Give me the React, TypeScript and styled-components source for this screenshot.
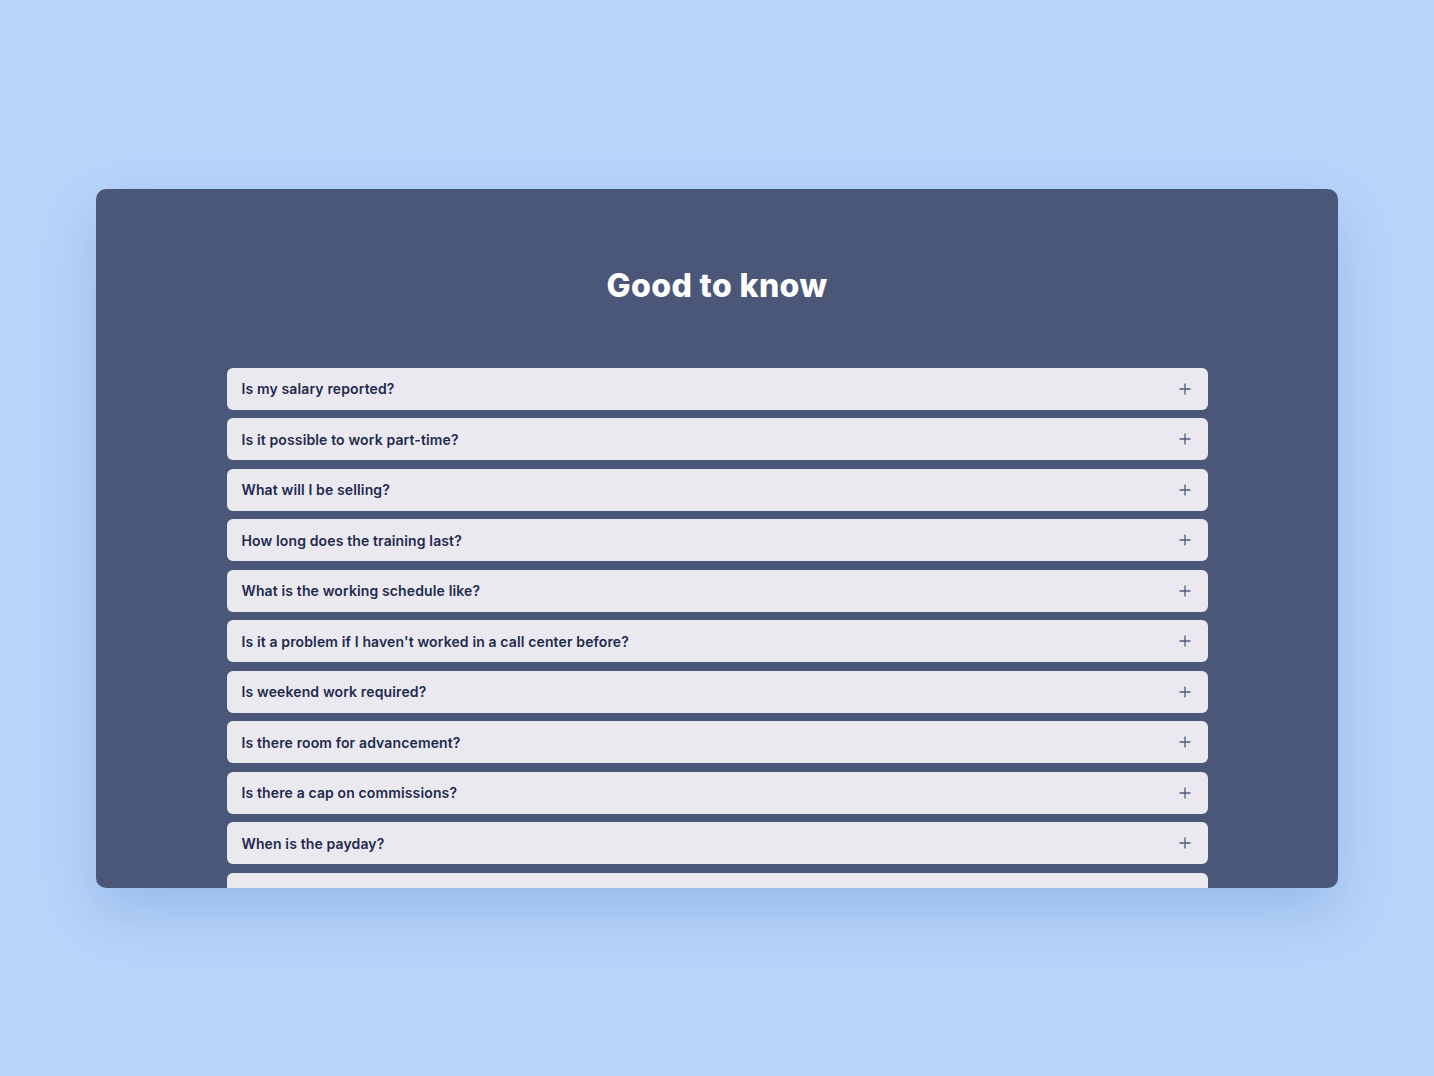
import React from 'react';
import styled, { createGlobalStyle } from 'styled-components';

const GlobalStyle = createGlobalStyle`
    html,
    body {
        margin: 0;
        padding: 0;
        background: #b8d5fa;
        font-family: Inter, 'Noto Sans', sans-serif;
    }
`;

const Page = styled.main`
    min-height: 100vh;
    display: flex;
    align-items: center;
    justify-content: center;
`;

const Card = styled.section`
    width: 1242px;
    height: 699px;
    box-sizing: border-box;
    padding-top: 78px;
    background: #4a5779;
    border-radius: 10px;
    overflow: hidden;
    box-shadow: 0 24px 60px rgba(70, 110, 190, 0.28);
    display: flex;
    flex-direction: column;
    align-items: center;
`;

const Title = styled.h2`
    margin: 0 0 63px;
    font-size: 32px;
    line-height: 38px;
    font-weight: 800;
    color: #ffffff;
    letter-spacing: 0.4px;
`;

const List = styled.ul`
    list-style: none;
    margin: 0;
    padding: 0;
    width: 981px;
    display: flex;
    flex-direction: column;
    gap: 8.5px;
`;

const Item = styled.li`
    height: 42px;
    flex-shrink: 0;
    box-sizing: border-box;
    padding: 0 17px 0 15px;
    display: flex;
    align-items: center;
    justify-content: space-between;
    background: #eae9f0;
    border-radius: 6px;
    cursor: pointer;

    .question {
        font-size: 14px;
        font-weight: 600;
        letter-spacing: 0.13px;
        color: #1f2a4d;
    }
`;

const questions = [
    'Is my salary reported?',
    'Is it possible to work part-time?',
    'What will I be selling?',
    'How long does the training last?',
    'What is the working schedule like?',
    "Is it a problem if I haven't worked in a call center before?",
    'Is weekend work required?',
    'Is there room for advancement?',
    'Is there a cap on commissions?',
    'When is the payday?',
    'Do I need my own equipment?'
];

function PlusIcon() {
    return (
        <svg width="12" height="12" viewBox="0 0 12 12" fill="none">
            <path d="M6 0.5v11M0.5 6h11" stroke="#4d5a80" strokeWidth="1.3" />
        </svg>
    );
}

export default function App() {
    return (
        <Page>
            <GlobalStyle />
            <Card>
                <Title>Good to know</Title>
                <List>
                    {questions.map((q) => (
                        <Item key={q}>
                            <span className="question">{q}</span>
                            <PlusIcon />
                        </Item>
                    ))}
                </List>
            </Card>
        </Page>
    );
}
